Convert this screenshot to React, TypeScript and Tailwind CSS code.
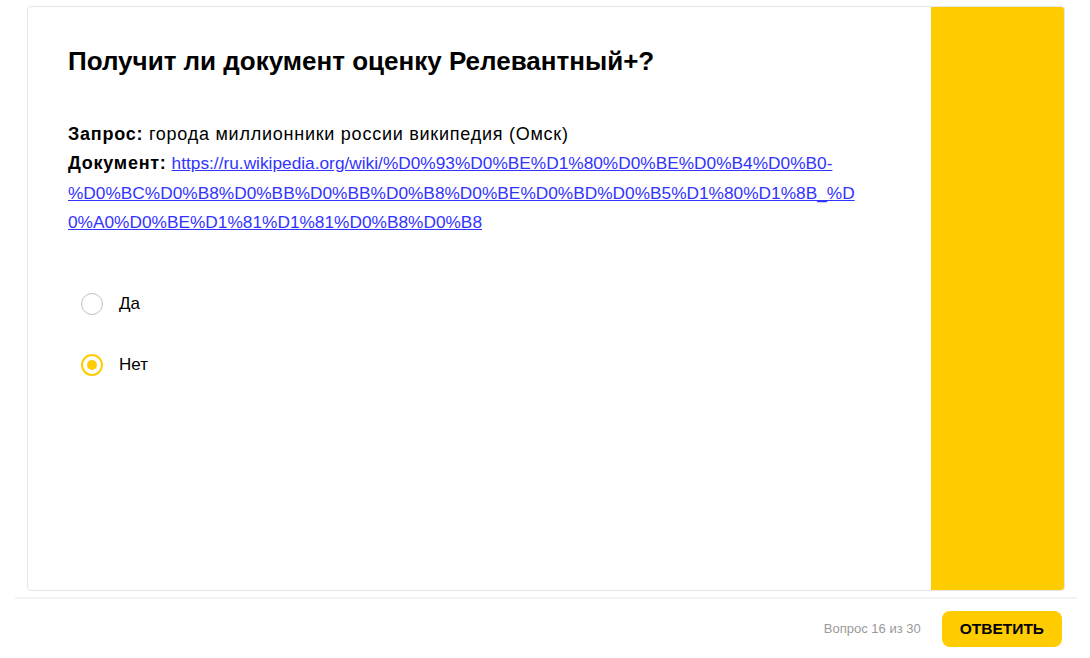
import { useState } from 'react'

const LINK =
  'https://ru.wikipedia.org/wiki/%D0%93%D0%BE%D1%80%D0%BE%D0%B4%D0%B0-%D0%BC%D0%B8%D0%BB%D0%BB%D0%B8%D0%BE%D0%BD%D0%B5%D1%80%D1%8B_%D0%A0%D0%BE%D1%81%D1%81%D0%B8%D0%B8'

const options = ['Да', 'Нет']

export default function App() {
  const [answer, setAnswer] = useState('Нет')

  return (
    <div
      className="flex h-[658px] w-full flex-col bg-white text-black"
      style={{ fontFamily: '"Liberation Sans", Arial, sans-serif' }}
    >
      <div className="pl-[27px] pr-[25px] pt-[6px]">
        <div className="flex h-[585px] overflow-hidden rounded-[4px] border border-[#e6e6e6]">
          <div className="flex-1 pl-[40px] pt-[38px]">
            <h1 className="text-[26px] font-bold leading-[32px]">
              Получит ли документ оценку Релевантный+?
            </h1>
            <div className="mt-[43px] w-[789px] text-[18px] leading-[29.3px]">
              <div className="tracking-[0.75px]">
                <span className="font-bold">Запрос:</span> города миллионники россии википедия (Омск)
              </div>
              <div className="break-words">
                <span className="font-bold tracking-[0.75px]">Документ:</span>{' '}
                <a href="#" className="text-[17.3px] text-[#3333ff] underline">
                  {LINK}
                </a>
              </div>
            </div>
            <div className="mt-[56px] ml-[13px] flex flex-col gap-[39px]">
              {options.map((o) => (
                <label
                  key={o}
                  className="flex h-[22px] cursor-pointer items-center gap-[16px] text-[17px]"
                  onClick={() => setAnswer(o)}
                >
                  {answer === o ? (
                    <span className="flex h-[22px] w-[22px] items-center justify-center rounded-full border-2 border-[#ffcc00]">
                      <span className="h-[10px] w-[10px] rounded-full bg-[#ffcc00]" />
                    </span>
                  ) : (
                    <span className="h-[22px] w-[22px] rounded-full border-[1.5px] border-[#bfbfbf]" />
                  )}
                  {o}
                </label>
              ))}
            </div>
          </div>
          <div className="w-[133px] bg-[#ffcc00]" />
        </div>
      </div>
      <div className="ml-[15px] mr-[13px] mt-[6px] border-t-2 border-[#f2f2f2]">
        <div className="flex items-center justify-end gap-[21px] pr-[15px] pt-[12px]">
          <span className="text-[13px] text-[#999999]">Вопрос 16 из 30</span>
          <button className="h-[36px] rounded-[8px] bg-[#ffcc00] px-[18px] text-[15.5px] font-bold text-black">
            ОТВЕТИТЬ
          </button>
        </div>
      </div>
    </div>
  )
}
